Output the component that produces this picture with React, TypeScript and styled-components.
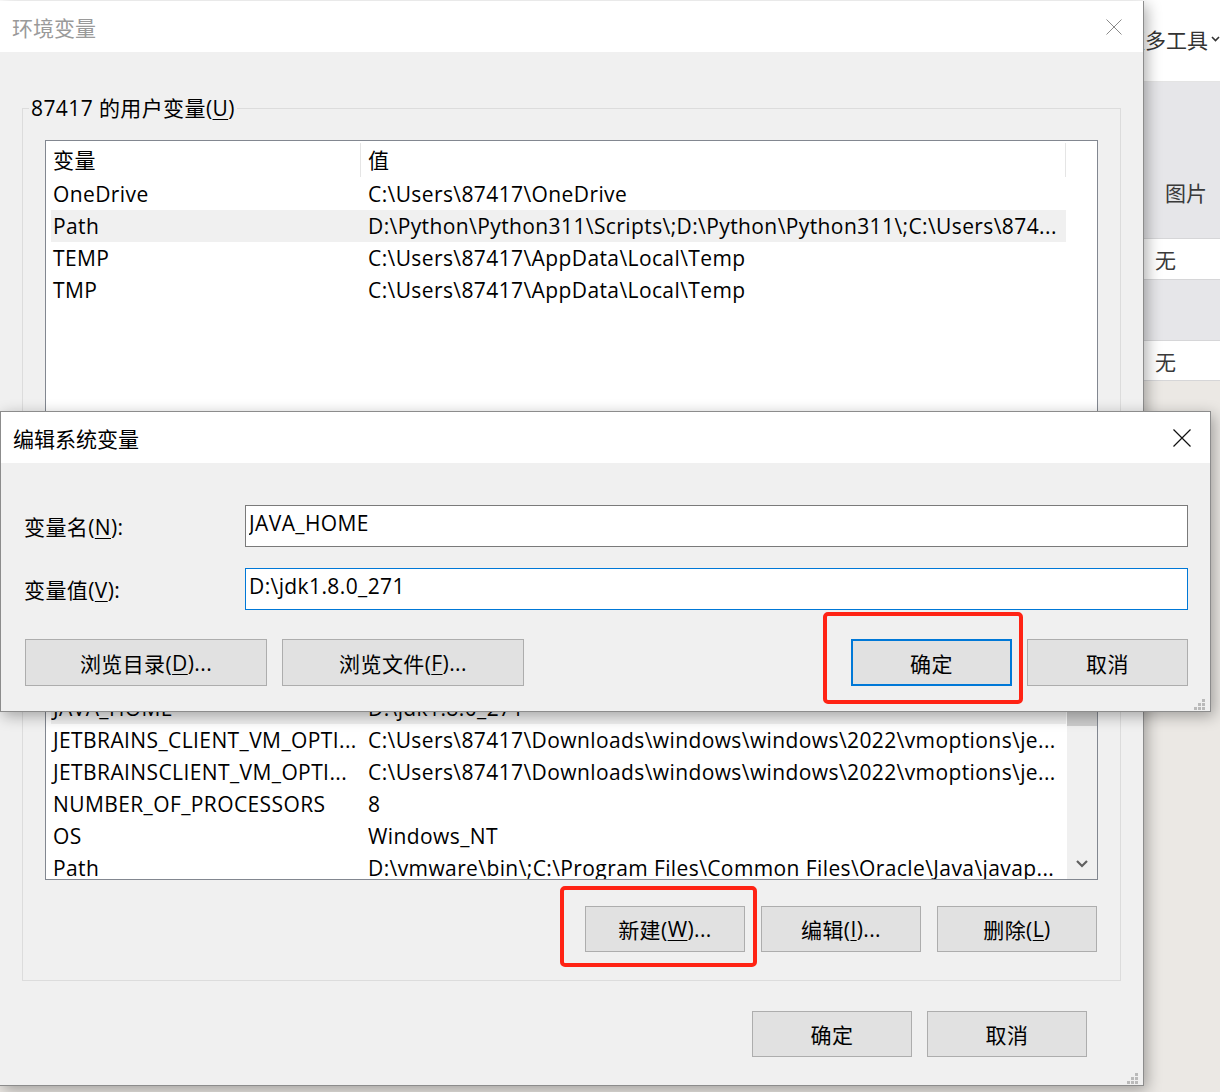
import React from "react";
import styled, { createGlobalStyle } from "styled-components";

const UI_FONT = `"Open Sans", "Noto Sans CJK SC", "Noto Sans", sans-serif`;

const GlobalStyle = createGlobalStyle`
  html, body { margin: 0; padding: 0; }
  body { background: #ebe8e4; font-family: ${UI_FONT}; }
  * { box-sizing: border-box; }
`;

const Desktop = styled.div`
  position: relative;
  width: 1220px;
  height: 1092px;
  overflow: hidden;
  background: #f2f2f2;
  font-family: ${UI_FONT};
  font-size: 21px;
  letter-spacing: 0.4px;
  color: #000;
`;

/* ---------- background web page (right strip) ---------- */
const WebPage = styled.div`
  display: flex;
  flex-direction: column;
  height: 100%;
`;

const WebTopBar = styled.div`
  height: 82px;
  flex-shrink: 0;
  background: #fff;
  display: flex;
  align-items: center;
  justify-content: flex-end;
  gap: 3px;
  padding-bottom: 4px;
  color: #333;
  letter-spacing: 0;
  border-bottom: 1px solid #e4e4e4;
`;

const WebRow = styled.div<{ $h: number; $bg: string }>`
  height: ${(p) => p.$h}px;
  flex-shrink: 0;
  background: ${(p) => p.$bg};
  border-bottom: 1px solid #d6d6d8;
  display: flex;
  justify-content: flex-end;
`;

const WebCell = styled.div<{ $pl: number; $pt?: number }>`
  width: 77px;
  padding-left: ${(p) => p.$pl}px;
  padding-top: ${(p) => p.$pt ?? 0}px;
  display: flex;
  align-items: center;
  color: #3a3a3a;
  letter-spacing: 0;
`;

const WebRest = styled.div`
  flex: 1;
  background: #ebe8e4;
`;

/* ---------- windows ---------- */
const Window = styled.section<{ $top: number; $w: number; $h: number; $edges: string }>`
  position: absolute;
  left: 0;
  top: ${(p) => p.$top}px;
  width: ${(p) => p.$w}px;
  height: ${(p) => p.$h}px;
  background: #f0f0f0;
  border: solid #8c8c8c;
  border-width: ${(p) => p.$edges};
  display: flex;
  flex-direction: column;
  box-shadow: 3px 4px 14px rgba(0, 0, 0, 0.32);
`;

const TitleBar = styled.header<{ $h: number; $pr: number }>`
  height: ${(p) => p.$h}px;
  flex-shrink: 0;
  background: #fff;
  display: flex;
  align-items: center;
  justify-content: space-between;
  padding: 0 ${(p) => p.$pr}px 0 12px;
`;

const Title = styled.h1<{ $inactive?: boolean }>`
  margin: 0;
  font-size: 21px;
  font-weight: 400;
  letter-spacing: 0;
  color: ${(p) => (p.$inactive ? "#9a9a9a" : "#000")};
`;

const MainBody = styled.div`
  flex: 1;
  display: flex;
  flex-direction: column;
  padding: 42px 22px 0 22px;
`;

const GroupBox = styled.fieldset<{ $mt: number }>`
  margin: ${(p) => p.$mt}px 0 0;
  padding: 18px 22px 28px 6px;
  border: 1px solid #dcdcdc;
  min-width: 0;
`;

const Legend = styled.legend`
  padding: 0 2px;
  line-height: 28px;
  font-size: 21px;
`;

const Key = styled.span`
  text-decoration: underline;
  text-decoration-thickness: 1px;
  text-underline-offset: 3px;
`;

const ListBox = styled.div<{ $h: number }>`
  margin-left: 16px;
  height: ${(p) => p.$h}px;
  border: 1px solid #828790;
  background: #fff;
  display: flex;
  overflow: hidden;
`;

const ListMain = styled.div`
  width: 1020px;
  flex-shrink: 0;
  padding-left: 5px;
  display: flex;
  flex-direction: column;
`;

const ListHeader = styled.div`
  display: flex;
  height: 37px;
  flex-shrink: 0;
  padding-bottom: 1px;
`;

const HeaderCell = styled.div<{ $w: number; $pl: number }>`
  position: relative;
  width: ${(p) => p.$w}px;
  padding-left: ${(p) => p.$pl}px;
  display: flex;
  align-items: center;
  &::after {
    content: "";
    position: absolute;
    right: 0;
    top: 2px;
    bottom: 0;
    width: 1px;
    background: #e5e5e5;
  }
`;

const Row = styled.div<{ $selected?: boolean }>`
  display: flex;
  height: 32px;
  flex-shrink: 0;
  align-items: center;
  background: ${(p) => (p.$selected ? "#f0f0f0" : "transparent")};
`;

const Cell = styled.div<{ $w: number; $pl: number }>`
  width: ${(p) => p.$w}px;
  padding-left: ${(p) => p.$pl}px;
  white-space: nowrap;
  overflow: hidden;
`;

const ScrollBar = styled.div`
  width: 30px;
  margin-left: 1px;
  background: #f0f0f0;
  display: flex;
  flex-direction: column;
`;

const ScrollArrow = styled.div`
  height: 30px;
  flex-shrink: 0;
  display: flex;
  align-items: center;
  justify-content: center;
`;

const ScrollTrack = styled.div`
  flex: 1;
`;

const ScrollThumb = styled.div`
  margin-top: 18px;
  height: 87px;
  background: #cdcdcd;
`;

const ButtonRow = styled.div<{ $mt: number; $gap: number; $justify: string; $pr?: number; $pl?: number }>`
  display: flex;
  margin-top: ${(p) => p.$mt}px;
  gap: ${(p) => p.$gap}px;
  justify-content: ${(p) => p.$justify};
  padding-right: ${(p) => p.$pr ?? 0}px;
  padding-left: ${(p) => p.$pl ?? 0}px;
`;

const ButtonGroup = styled.div`
  display: flex;
  gap: 15px;
`;

const Button = styled.button<{ $w: number; $h: number; $primary?: boolean }>`
  width: ${(p) => p.$w}px;
  height: ${(p) => p.$h}px;
  margin: 0;
  padding: 0;
  background: #e1e1e1;
  border: ${(p) => (p.$primary ? "2px solid #0078d7" : "1px solid #adadad")};
  font-family: ${UI_FONT};
  font-size: 21px;
  letter-spacing: 0.4px;
  color: #000;
  display: flex;
  align-items: center;
  justify-content: center;
`;

const Marked = styled.span<{ $t: number; $r: number; $b: number; $l: number }>`
  position: relative;
  display: inline-flex;
  &::after {
    content: "";
    position: absolute;
    top: -${(p) => p.$t}px;
    right: -${(p) => p.$r}px;
    bottom: -${(p) => p.$b}px;
    left: -${(p) => p.$l}px;
    border: 4px solid #ff2314;
    border-radius: 5px;
    pointer-events: none;
  }
`;

const Grip = styled.svg`
  position: absolute;
  right: 5px;
  bottom: 1px;
`;

/* ---------- edit dialog ---------- */
const EditBody = styled.div`
  flex: 1;
  display: flex;
  flex-direction: column;
  padding: 0 22px 0 23px;
`;

const FieldRow = styled.div<{ $mt: number }>`
  display: grid;
  grid-template-columns: 221px 1fr;
  align-items: center;
  margin-top: ${(p) => p.$mt}px;
`;

const FieldLabel = styled.label`
  white-space: nowrap;
`;

const TextField = styled.input<{ $focused?: boolean }>`
  height: 42px;
  width: 100%;
  margin: 0;
  padding: 0 3px 6px;
  border: 1px solid ${(p) => (p.$focused ? "#0078d7" : "#7a7a7a")};
  background: #fff;
  font-family: ${UI_FONT};
  font-size: 21px;
  letter-spacing: 0.4px;
  color: #000;
  outline: none;
`;

/* ---------- icons ---------- */
const CloseIcon = ({ size, color, w }: { size: number; color: string; w: number }) => (
  <svg width={size} height={size} viewBox={`0 0 ${size} ${size}`}>
    <path d={`M0.5 0.5 L${size - 0.5} ${size - 0.5} M${size - 0.5} 0.5 L0.5 ${size - 0.5}`} stroke={color} strokeWidth={w} fill="none" />
  </svg>
);

const GripDots = () => (
  <Grip width="11" height="11" viewBox="0 0 11 11">
    {[
      [8, 0],
      [4, 4],
      [8, 4],
      [0, 8],
      [4, 8],
      [8, 8],
    ].map(([x, y]) => (
      <rect key={`${x}-${y}`} x={x} y={y} width="3" height="3" fill="#bababa" />
    ))}
  </Grip>
);

type Item = { name: string; value: string; selected?: boolean };

const userVars: Item[] = [
  { name: "OneDrive", value: "C:\\Users\\87417\\OneDrive" },
  { name: "Path", value: "D:\\Python\\Python311\\Scripts\\;D:\\Python\\Python311\\;C:\\Users\\874...", selected: true },
  { name: "TEMP", value: "C:\\Users\\87417\\AppData\\Local\\Temp" },
  { name: "TMP", value: "C:\\Users\\87417\\AppData\\Local\\Temp" },
];

const systemVars: Item[] = [
  { name: "ComSpec", value: "C:\\WINDOWS\\system32\\cmd.exe" },
  { name: "DriverData", value: "C:\\Windows\\System32\\Drivers\\DriverData" },
  { name: "JAVA_HOME", value: "D:\\jdk1.8.0_271", selected: true },
  { name: "JETBRAINS_CLIENT_VM_OPTI...", value: "C:\\Users\\87417\\Downloads\\windows\\windows\\2022\\vmoptions\\je..." },
  { name: "JETBRAINSCLIENT_VM_OPTI...", value: "C:\\Users\\87417\\Downloads\\windows\\windows\\2022\\vmoptions\\je..." },
  { name: "NUMBER_OF_PROCESSORS", value: "8" },
  { name: "OS", value: "Windows_NT" },
  { name: "Path", value: "D:\\vmware\\bin\\;C:\\Program Files\\Common Files\\Oracle\\Java\\javap..." },
];

const VarList = ({ items, height, scroll }: { items: Item[]; height: number; scroll?: boolean }) => (
  <ListBox $h={height}>
    <ListMain>
      <ListHeader>
        <HeaderCell $w={310} $pl={2}>变量</HeaderCell>
        <HeaderCell $w={705} $pl={7}>值</HeaderCell>
      </ListHeader>
      {items.map((it) => (
        <Row key={it.name + it.value} $selected={it.selected}>
          <Cell $w={310} $pl={2}>{it.name}</Cell>
          <Cell $w={705} $pl={7}>{it.value}</Cell>
        </Row>
      ))}
    </ListMain>
    {scroll && (
      <ScrollBar>
        <ScrollArrow>
          <svg width="12" height="8" viewBox="0 0 12 8">
            <path d="M1 7 L6 2 L11 7" stroke="#606060" strokeWidth="2.2" fill="none" />
          </svg>
        </ScrollArrow>
        <ScrollTrack>
          <ScrollThumb />
        </ScrollTrack>
        <ScrollArrow>
          <svg width="12" height="8" viewBox="0 0 12 8">
            <path d="M1 1 L6 6 L11 1" stroke="#606060" strokeWidth="2.2" fill="none" />
          </svg>
        </ScrollArrow>
      </ScrollBar>
    )}
  </ListBox>
);

export default function App() {
  return (
    <>
      <GlobalStyle />
      <Desktop>
        <WebPage>
          <WebTopBar>
            <span>更多工具</span>
            <svg width="9" height="6" viewBox="0 0 9 6">
              <path d="M1 1 L4.5 4.5 L8 1" stroke="#333" strokeWidth="1.6" fill="none" />
            </svg>
          </WebTopBar>
          <WebRow $h={157} $bg="#e6e6e9">
            <WebCell $pl={22} $pt={64}>图片</WebCell>
          </WebRow>
          <WebRow $h={41} $bg="#ffffff">
            <WebCell $pl={12}>无</WebCell>
          </WebRow>
          <WebRow $h={61} $bg="#e6e6e9">
            <WebCell $pl={12} />
          </WebRow>
          <WebRow $h={40} $bg="#ffffff">
            <WebCell $pl={12}>无</WebCell>
          </WebRow>
          <WebRest />
        </WebPage>

        <Window $top={1} $w={1144} $h={1085} $edges="0 1px 1px 0">
          <TitleBar $h={51} $pr={21}>
            <Title $inactive>环境变量</Title>
            <CloseIcon size={16} color="#8a8a8a" w={1} />
          </TitleBar>
          <MainBody>
            <GroupBox $mt={0}>
              <Legend>
                87417 的用户变量(<Key>U</Key>)
              </Legend>
              <VarList items={userVars} height={294} />
              <ButtonRow $mt={26} $gap={16} $justify="flex-end" $pr={1}>
                <Button $w={160} $h={46}>新建(<Key>N</Key>)...</Button>
                <Button $w={160} $h={46}>编辑(<Key>E</Key>)...</Button>
                <Button $w={160} $h={46}>删除(<Key>D</Key>)</Button>
              </ButtonRow>
            </GroupBox>
            <GroupBox $mt={9}>
              <Legend>
                系统变量(<Key>S</Key>)
              </Legend>
              <VarList items={systemVars} height={290} scroll />
              <ButtonRow $mt={26} $gap={16} $justify="flex-end" $pr={1}>
                <Marked $t={20} $r={12} $b={15} $l={25}>
                  <Button $w={160} $h={46}>新建(<Key>W</Key>)...</Button>
                </Marked>
                <Button $w={160} $h={46}>编辑(<Key>I</Key>)...</Button>
                <Button $w={160} $h={46}>删除(<Key>L</Key>)</Button>
              </ButtonRow>
            </GroupBox>
            <ButtonRow $mt={30} $gap={15} $justify="flex-end" $pr={34}>
              <Button $w={160} $h={46}>确定</Button>
              <Button $w={160} $h={46}>取消</Button>
            </ButtonRow>
          </MainBody>
          <GripDots />
        </Window>

        <Window $top={411} $w={1211} $h={301} $edges="1px">
          <TitleBar $h={51} $pr={19}>
            <Title>编辑系统变量</Title>
            <CloseIcon size={18} color="#111" w={1.2} />
          </TitleBar>
          <EditBody>
            <FieldRow $mt={42}>
              <FieldLabel>
                变量名(<Key>N</Key>):
              </FieldLabel>
              <TextField readOnly defaultValue="JAVA_HOME" />
            </FieldRow>
            <FieldRow $mt={21}>
              <FieldLabel>
                变量值(<Key>V</Key>):
              </FieldLabel>
              <TextField readOnly $focused defaultValue="D:\jdk1.8.0_271" />
            </FieldRow>
            <ButtonRow $mt={29} $gap={15} $justify="space-between" $pl={1}>
              <ButtonGroup>
                <Button $w={242} $h={47}>浏览目录(<Key>D</Key>)...</Button>
                <Button $w={242} $h={47}>浏览文件(<Key>F</Key>)...</Button>
              </ButtonGroup>
              <ButtonGroup>
                <Marked $t={27} $r={11} $b={18} $l={28}>
                  <Button $w={161} $h={47} $primary>确定</Button>
                </Marked>
                <Button $w={161} $h={47}>取消</Button>
              </ButtonGroup>
            </ButtonRow>
          </EditBody>
          <GripDots />
        </Window>
      </Desktop>
    </>
  );
}
